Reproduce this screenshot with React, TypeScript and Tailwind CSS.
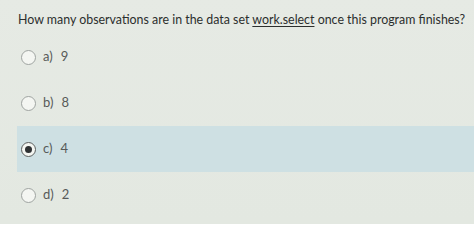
const options = [
  { label: "a)", value: "9", selected: false },
  { label: "b)", value: "8", selected: false },
  { label: "c)", value: "4", selected: true },
  { label: "d)", value: "2", selected: false },
]

function Radio({ checked }: { checked: boolean }) {
  return (
    <span
      className={
        "flex h-[15px] w-[15px] shrink-0 items-center justify-center rounded-full border bg-[#f4f6f2] " +
        (checked ? "border-[#5c5f5e] border-[1.5px]" : "border-[#9fa4a1]")
      }
    >
      {checked && <span className="h-[7px] w-[7px] rounded-full bg-[#2e3133]" />}
    </span>
  )
}

export default function App() {
  return (
    <div className="h-[224px] w-[474px] overflow-hidden bg-gradient-to-b from-[#e6eae4] to-[#e3e8e1] font-['Lato',sans-serif]">
      <div className="pl-[18px] pt-[11px]">
        <h1 className="whitespace-nowrap text-[12.4px] leading-[18px] text-[#2c2e2d]">
          How many observations are in the data set{" "}
          <span className="underline underline-offset-2">work.select</span> once this program finishes?
        </h1>
      </div>
      <div className="mt-[5px] flex flex-col">
        {options.map((o) => (
          <div
            key={o.label}
            className={
              "ml-[17px] flex h-[46px] items-center gap-[7px] pl-[4px] " +
              (o.selected ? "bg-[#cee0e3]" : "")
            }
          >
            <Radio checked={o.selected} />
            <span className="flex gap-[8px] text-[13px] text-[#575a59]">
              <span>{o.label}</span>
              <span>{o.value}</span>
            </span>
          </div>
        ))}
      </div>
    </div>
  )
}
